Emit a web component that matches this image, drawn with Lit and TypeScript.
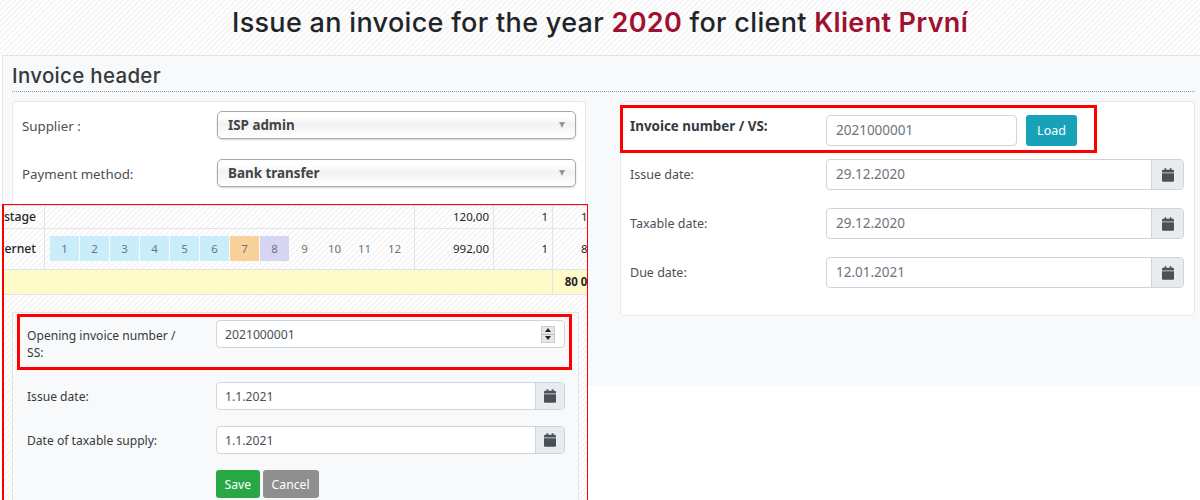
import { LitElement, html, css } from "lit";
import { customElement } from "lit/decorators.js";

const calendar = html`<svg class="cal" viewBox="0 0 448 512" aria-hidden="true"><path d="M12 192h424c6.6 0 12 5.4 12 12v260c0 26.5-21.5 48-48 48H48c-26.5 0-48-21.5-48-48V204c0-6.6 5.4-12 12-12zm436-44v-36c0-26.5-21.5-48-48-48h-48V12c0-6.6-5.4-12-12-12h-40c-6.6 0-12 5.4-12 12v52H160V12c0-6.6-5.4-12-12-12h-40c-6.6 0-12 5.4-12 12v52H48C21.5 64 0 85.5 0 112v36c0 6.6 5.4 12 12 12h424c6.6 0 12-5.4 12-12z"/></svg>`;

const months = [
  ["1", "a"], ["2", "a"], ["3", "a"], ["4", "a"], ["5", "a"], ["6", "a"],
  ["7", "o"], ["8", "v"], ["9", ""], ["10", ""], ["11", ""], ["12", ""],
];

@customElement("app-root")
export class AppRoot extends LitElement {
  static styles = css`
    :host {
      display: block;
      width: 1200px;
      height: 500px;
      overflow: hidden;
      background: #fff;
      font-family: "Noto Sans", sans-serif;
      font-size: 12.5px;
      color: #495057;
    }
    * { box-sizing: border-box; }
    .hatch {
      background: repeating-linear-gradient(135deg, #fff, #fff 2px, #f6f6f6 2px, #f6f6f6 4px);
    }
    .title {
      height: 55px;
      display: flex;
      align-items: center;
      justify-content: center;
      padding-bottom: 11px;
      font-family: Inter, sans-serif;
      font-size: 27px;
      font-weight: 500;
      letter-spacing: 0.32px;
      color: #212529;
    }
    .title b { font-weight: 600; color: #a01030; }
    .main {
      margin-left: 2px;
      height: 331px;
      background: #f8f9fa;
      border-top: 1px solid #e3e3e3;
      border-left: 1px solid #e8e8e8;
      padding: 0 5px 0 9px;
    }
    h2 {
      margin: 0;
      height: 36px;
      padding-top: 8px;
      font-family: Inter, sans-serif;
      font-size: 20.5px;
      font-weight: 500;
      letter-spacing: 0.3px;
      line-height: 24px;
      color: #343a40;
      border-bottom: 1px dotted #999;
    }
    .cols {
      display: grid;
      grid-template-columns: 574px 575px;
      column-gap: 34px;
      margin-top: 9px;
      align-items: start;
    }
    .card {
      background: #fff;
      border: 1px solid #e6e8eb;
      border-radius: 4px;
    }
    .left-card { height: 109px; padding: 9px 9px 0; border-bottom: 0; border-radius: 4px 4px 0 0; }
    .sel-row {
      display: grid;
      grid-template-columns: 195px 1fr;
      align-items: center;
      height: 28px;
      margin-bottom: 20px;
      font-size: 13.3px;
    }
    .sel-row .l { padding-top: 2px; }
    .select {
      height: 28px;
      border: 1px solid #aaa;
      border-radius: 5px;
      background: linear-gradient(#fff 20%, #f0f0f0 50%, #f4f4f4 52%, #fff);
      box-shadow: 0 1px 2px rgba(0, 0, 0, 0.18);
      display: flex;
      align-items: center;
      justify-content: space-between;
      padding: 0 10px;
      font-weight: 700;
      color: #444;
      font-size: 13.4px;
    }
    .arrow { width: 0; height: 0; border: 3.5px solid transparent; border-top: 6px solid #999; border-bottom: 0; }
    .red-wrap {
      position: relative;
      margin: -6px 0 0 -10px;
      width: 586px;
      height: 300px;
      border: 1px solid #f00;
      border-left-width: 2px;
      border-bottom: 0;
      overflow: hidden;
    }
    .tbl { margin-left: -27px; width: 645px; border-collapse: collapse; table-layout: fixed; font-size: 11.5px; }
    .tbl td { border: 1px solid #e3e4ea; padding: 0 4px 1px; text-align: right; color: #212529; }
    .tbl td.name { font-weight: 500; font-size: 12.2px; padding-right: 8px; }
    .tbl tr.r1 td { height: 23px; }
    .tbl tr.r2 td { height: 41px; }
    .tbl tr.r3 td { height: 25px; background: #fefac9; font-weight: 700; }
    .months { display: flex; gap: 1px; padding-left: 1px; }
    .m {
      width: 29px;
      height: 25px;
      display: flex;
      align-items: center;
      justify-content: center;
      color: #6c757d;
      font-size: 11.5px;
    }
    .m.a { background: #c9eef9; }
    .m.o { background: #f9d29b; }
    .m.v { background: #d6d6f2; }
    .panel {
      margin: 17px 0 0 8px;
      width: 567px;
      height: 190px;
      background: #f8f9fa;
      border: 1px solid #e3e4e6;
      border-bottom: 0;
      padding: 1px 6px 0 4px;
      font-size: 12.1px;
      color: #343a40;
    }
    .redbox { border: 3px solid #f00; }
    .row {
      display: grid;
      grid-template-columns: 196px 1fr;
      align-items: start;
    }
    .panel .first { height: 56px; padding: 3px 4px 0 7px; grid-template-columns: 189px 1fr; }
    .panel .first .lbl { line-height: 17px; max-width: 165px; padding-top: 7px; }
    .panel .plain { padding: 0 7px 0 10px; grid-template-columns: 189px 1fr; height: 28px; align-items: center; }
    .panel .p1 { margin-top: 12px; }
    .panel .p2 { margin-top: 16px; }
    .field {
      height: 28px;
      background: #fff;
      border: 1px solid #ced4da;
      border-radius: 4px;
      display: flex;
      align-items: stretch;
      overflow: hidden;
      color: #495057;
    }
    .field .v { flex: 1; padding: 0 0 0 8px; display: flex; align-items: center; font-size: 12.2px; }
    .addon {
      width: 29px;
      background: #e9ecef;
      border-left: 1px solid #ced4da;
      display: flex;
      align-items: center;
      justify-content: center;
    }
    .cal { width: 12px; height: 14px; fill: #495057; }
    .spin {
      width: 14px;
      height: 17px;
      align-self: center;
      margin-right: 9px;
      background: #e6e6e6;
      border: 1px solid #ccc;
      display: flex;
      flex-direction: column;
    }
    .spin span { flex: 1; display: flex; align-items: center; justify-content: center; }
    .spin span + span { border-top: 1px solid #bbb; }
    .up, .down { width: 0; height: 0; border: 3px solid transparent; display: block; }
    .up { border-bottom: 4px solid #222; border-top: 0; }
    .down { border-top: 4px solid #222; border-bottom: 0; }
    .btns { display: flex; gap: 3px; margin: 16px 0 0 199px; }
    .btn {
      height: 28px;
      padding: 0 8.5px;
      border-radius: 3px;
      color: #fff;
      display: flex;
      align-items: center;
      font-size: 12.2px;
    }
    .save { background: #28a745; }
    .cancel { background: #8f8f8f; padding: 0 9px; }
    .right-card { height: 215px; padding-top: 3px; }
    .right-card .field .v { font-size: 13.5px; padding-left: 9px; color: #6c757d; padding-bottom: 2px; }
    .right-card .redbox {
      width: 477px;
      height: 48px;
      margin-left: -1px;
      padding: 7px 0 0 7px;
      display: grid;
      grid-template-columns: 196px 191px 60px;
    }
    .right-card .redbox .lbl { font-weight: 700; line-height: 20px; padding-top: 1px; font-size: 13.4px; color: #343a40; }
    .right-card .field.n { height: 31px; }
    .load {
      margin-left: 9px;
      width: 51px;
      height: 31px;
      background: #17a2b8;
      border-radius: 3px;
      color: #fff;
      display: flex;
      align-items: center;
      justify-content: center;
      font-size: 12.5px;
    }
    .right-card .plain {
      padding: 0 10px 0 9px;
      align-items: center;
      margin-top: 18px;
    }
    .right-card .plain.f { margin-top: 6px; }
    .right-card .plain .l { padding-bottom: 1px; }
    .right-card .plain .field { height: 31px; }
    .right-card .addon { width: 32px; }
  `;

  private dateField(v: string) {
    return html`<div class="field"><div class="v">${v}</div><div class="addon">${calendar}</div></div>`;
  }

  render() {
    return html`
      <div class="title hatch"><span>Issue an invoice for the year <b>2020</b> for client <b>Klient První</b></span></div>
      <div class="main">
        <h2>Invoice header</h2>
        <div class="cols">
          <div>
            <div class="card left-card">
              <div class="sel-row"><div class="l">Supplier :</div><div class="select">ISP admin<span class="arrow"></span></div></div>
              <div class="sel-row"><div class="l">Payment method:</div><div class="select">Bank transfer<span class="arrow"></span></div></div>
            </div>
            <div class="red-wrap hatch">
              <table class="tbl">
                <colgroup><col style="width:67px" /><col style="width:370px" /><col style="width:79px" /><col style="width:59px" /><col /></colgroup>
                <tr class="r1"><td class="name">Postage</td><td></td><td>120,00</td><td>1</td><td>120,00</td></tr>
                <tr class="r2">
                  <td class="name">Internet</td>
                  <td><div class="months">${months.map(([n, c]) => html`<div class="m ${c}">${n}</div>`)}</div></td>
                  <td>992,00</td><td>1</td><td>892,00</td>
                </tr>
                <tr class="r3"><td colspan="4"></td><td>80 000,00</td></tr>
              </table>
              <div class="panel">
                <div class="redbox row first">
                  <div class="lbl">Opening invoice number / SS:</div>
                  <div class="field"><div class="v">2021000001</div><div class="spin"><span><i class="up"></i></span><span><i class="down"></i></span></div></div>
                </div>
                <div class="row plain p1"><div>Issue date:</div>${this.dateField("1.1.2021")}</div>
                <div class="row plain p2"><div>Date of taxable supply:</div>${this.dateField("1.1.2021")}</div>
                <div class="btns"><div class="btn save">Save</div><div class="btn cancel">Cancel</div></div>
              </div>
            </div>
          </div>
          <div class="card right-card">
            <div class="redbox">
              <div class="lbl">Invoice number / VS:</div>
              <div class="field n"><div class="v">2021000001</div></div>
              <div class="load">Load</div>
            </div>
            <div class="row plain f"><div class="l">Issue date:</div>${this.dateField("29.12.2020")}</div>
            <div class="row plain"><div class="l">Taxable date:</div>${this.dateField("29.12.2020")}</div>
            <div class="row plain"><div class="l">Due date:</div>${this.dateField("12.01.2021")}</div>
          </div>
        </div>
      </div>
    `;
  }
}
